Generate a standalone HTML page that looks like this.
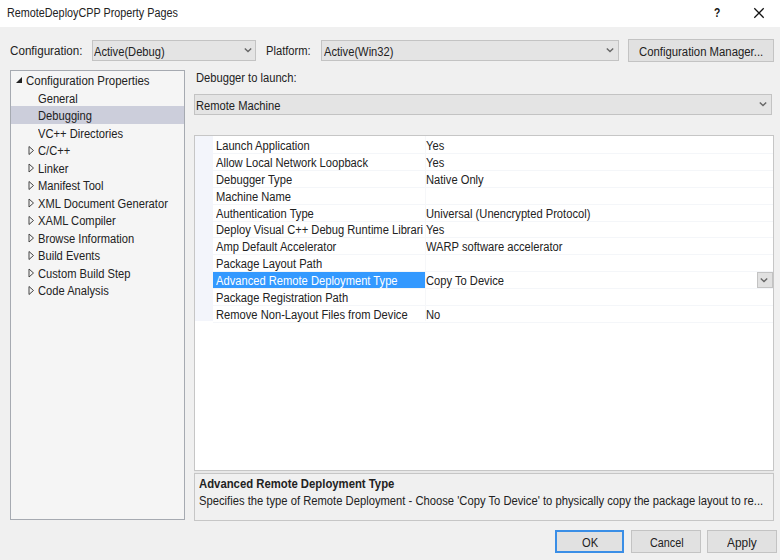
<!DOCTYPE html>
<html><head><meta charset="utf-8">
<style>
html,body{margin:0;padding:0;width:780px;height:560px;overflow:hidden;background:#f0f0f0;}
body{position:relative;font-family:"Liberation Sans",sans-serif;font-size:11.15px;color:#222;}
.a{position:absolute;}
.t{position:absolute;line-height:15px;white-space:pre;font-size:12px;transform:scaleX(var(--sx,0.93));transform-origin:0 0;}
.box{position:absolute;box-sizing:border-box;}
.combo{background:#e4e4e4;border:1px solid #c3c3c3;}
.btn{background:#e1e1e1;border:1px solid #c3c3c3;box-sizing:border-box;position:absolute;}
.chev{position:absolute;}
</style></head><body>
<!-- title bar -->
<div class="a" style="left:0;top:0;width:780px;height:27px;background:#fff;"></div>
<div class="t" style="left:7px;top:6.3px;--sx:0.9;">RemoteDeployCPP Property Pages</div>
<div class="t" style="left:714.4px;top:6px;font-size:12.5px;font-weight:bold;--sx:0.82;color:#111;">?</div>
<svg class="a" style="left:753px;top:7px;" width="12" height="12" viewBox="0 0 12 12"><path d="M1.3 1.3L10.7 10.7M10.7 1.3L1.3 10.7" stroke="#111" stroke-width="1.25" fill="none"/></svg>

<!-- configuration row -->
<div class="t" style="left:10px;top:44px;--sx:0.97;">Configuration:</div>
<div class="box combo" style="left:92px;top:40px;width:164px;height:21px;"></div>
<div class="t" style="left:94px;top:44.5px;">Active(Debug)</div>
<svg class="chev" style="left:243.9px;top:47.2px;" width="9" height="6" viewBox="0 0 9 6"><path d="M0.8 1.5L4 4.6L7.2 1.5" stroke="#666" stroke-width="1.4" fill="none"/></svg>

<div class="t" style="left:266px;top:44px;">Platform:</div>
<div class="box combo" style="left:321px;top:40px;width:298px;height:21px;"></div>
<div class="t" style="left:324px;top:44.5px;">Active(Win32)</div>
<svg class="chev" style="left:605.9px;top:47.2px;" width="9" height="6" viewBox="0 0 9 6"><path d="M0.8 1.5L4 4.6L7.2 1.5" stroke="#666" stroke-width="1.4" fill="none"/></svg>

<div class="btn" style="left:628px;top:39px;width:146px;height:23px;"></div>
<div class="t" style="left:639px;top:45px;--sx:0.945;">Configuration Manager...</div>

<!-- tree -->
<div class="box" style="left:10px;top:70px;width:175px;height:450px;background:#f5f5f5;border:1px solid #a6aab1;"></div>
<div class="a" style="left:11px;top:106.2px;width:173px;height:17.4px;background:#cccedb;"></div>
<svg class="a" style="left:15px;top:76px;" width="8" height="8" viewBox="0 0 8 8"><path d="M7 1L7 7L1 7Z" fill="#222"/></svg>
<div class="t" style="left:26px;top:74.1px;--sx:0.955;">Configuration Properties</div>
<div class="t" style="left:38px;top:91.6px;">General</div>
<div class="t" style="left:38px;top:109.1px;">Debugging</div>
<div class="t" style="left:38px;top:126.6px;">VC++ Directories</div>
<div class="t" style="left:38px;top:144.1px;">C/C++</div>
<div class="t" style="left:38px;top:161.6px;">Linker</div>
<div class="t" style="left:38px;top:179.1px;">Manifest Tool</div>
<div class="t" style="left:38px;top:196.6px;">XML Document Generator</div>
<div class="t" style="left:38px;top:214.1px;">XAML Compiler</div>
<div class="t" style="left:38px;top:231.6px;">Browse Information</div>
<div class="t" style="left:38px;top:249.1px;">Build Events</div>
<div class="t" style="left:38px;top:266.6px;">Custom Build Step</div>
<div class="t" style="left:38px;top:284.1px;">Code Analysis</div>
<svg class="a" style="left:28px;top:141px;" width="7" height="160" viewBox="0 0 7 160">
<g fill="none" stroke="#444" stroke-width="1">
<path d="M1 5.5L1 13.5L5.5 9.5Z"/>
<path d="M1 23L1 31L5.5 27Z"/>
<path d="M1 40.5L1 48.5L5.5 44.5Z"/>
<path d="M1 58L1 66L5.5 62Z"/>
<path d="M1 75.5L1 83.5L5.5 79.5Z"/>
<path d="M1 93L1 101L5.5 97Z"/>
<path d="M1 110.5L1 118.5L5.5 114.5Z"/>
<path d="M1 128L1 136L5.5 132Z"/>
<path d="M1 145.5L1 153.5L5.5 149.5Z"/>
</g></svg>

<!-- debugger to launch -->
<div class="t" style="left:196px;top:71px;">Debugger to launch:</div>
<div class="box combo" style="left:194px;top:94px;width:578px;height:21px;"></div>
<div class="t" style="left:196px;top:98.9px;">Remote Machine</div>
<svg class="chev" style="left:759.2px;top:101px;" width="9" height="6" viewBox="0 0 9 6"><path d="M0.8 1.5L4 4.6L7.2 1.5" stroke="#666" stroke-width="1.4" fill="none"/></svg>

<!-- property grid -->
<div class="box" style="left:194px;top:135px;width:580px;height:336px;background:#fff;border:1px solid #c6c6c6;"></div>
<div class="a" style="left:195px;top:136px;width:18px;height:185px;background:#f3f5fb;"></div>
<div id="rows">
<div class="a" style="left:213px;top:153.33px;width:560px;height:1px;background:#f4f6f9;"></div>
<div class="t" style="left:216px;top:139.30px;width:224.7px;overflow:hidden;color:#222;">Launch Application</div>
<div class="t" style="left:426px;top:139.30px;">Yes</div>
<div class="a" style="left:213px;top:170.16px;width:560px;height:1px;background:#f4f6f9;"></div>
<div class="t" style="left:216px;top:156.13px;width:224.7px;overflow:hidden;color:#222;">Allow Local Network Loopback</div>
<div class="t" style="left:426px;top:156.13px;">Yes</div>
<div class="a" style="left:213px;top:186.99px;width:560px;height:1px;background:#f4f6f9;"></div>
<div class="t" style="left:216px;top:172.96px;width:224.7px;overflow:hidden;color:#222;">Debugger Type</div>
<div class="t" style="left:426px;top:172.96px;">Native Only</div>
<div class="a" style="left:213px;top:203.82px;width:560px;height:1px;background:#f4f6f9;"></div>
<div class="t" style="left:216px;top:189.79px;width:224.7px;overflow:hidden;color:#222;">Machine Name</div>
<div class="a" style="left:213px;top:220.65px;width:560px;height:1px;background:#f4f6f9;"></div>
<div class="t" style="left:216px;top:206.62px;width:224.7px;overflow:hidden;color:#222;">Authentication Type</div>
<div class="t" style="left:426px;top:206.62px;">Universal (Unencrypted Protocol)</div>
<div class="a" style="left:213px;top:237.48px;width:560px;height:1px;background:#f4f6f9;"></div>
<div class="t" style="left:216px;top:223.45px;width:224.7px;overflow:hidden;color:#222;">Deploy Visual C++ Debug Runtime Librari</div>
<div class="t" style="left:426px;top:223.45px;">Yes</div>
<div class="a" style="left:213px;top:254.31px;width:560px;height:1px;background:#f4f6f9;"></div>
<div class="t" style="left:216px;top:240.28px;width:224.7px;overflow:hidden;color:#222;">Amp Default Accelerator</div>
<div class="t" style="left:426px;top:240.28px;">WARP software accelerator</div>
<div class="a" style="left:213px;top:271.14px;width:560px;height:1px;background:#f4f6f9;"></div>
<div class="t" style="left:216px;top:257.11px;width:224.7px;overflow:hidden;color:#222;">Package Layout Path</div>
<div class="a" style="left:213px;top:287.97px;width:560px;height:1px;background:#f4f6f9;"></div>
<div class="a" style="left:213px;top:271.94px;width:212px;height:15.83px;background:#3399ff;"></div>
<div class="t" style="left:216px;top:273.94px;width:224.7px;overflow:hidden;color:#fff;">Advanced Remote Deployment Type</div>
<div class="t" style="left:426px;top:273.94px;">Copy To Device</div>
<div class="a" style="left:213px;top:304.80px;width:560px;height:1px;background:#f4f6f9;"></div>
<div class="t" style="left:216px;top:290.77px;width:224.7px;overflow:hidden;color:#222;">Package Registration Path</div>
<div class="a" style="left:213px;top:321.63px;width:560px;height:1px;background:#f4f6f9;"></div>
<div class="t" style="left:216px;top:307.60px;width:224.7px;overflow:hidden;color:#222;">Remove Non-Layout Files from Device</div>
<div class="t" style="left:426px;top:307.60px;">No</div>
<div class="a" style="left:425px;top:136px;width:1px;height:185px;background:#f6f7f9;"></div>
<div class="btn" style="left:757px;top:272px;width:16px;height:16px;"></div>
<svg class="chev" style="left:760.2px;top:276.5px;" width="9" height="6" viewBox="0 0 9 6"><path d="M0.8 1.5L4 4.6L7.2 1.5" stroke="#666" stroke-width="1.4" fill="none"/></svg>
</div><!--/rows-->

<!-- description -->
<div class="box" style="left:194px;top:473px;width:580px;height:48px;background:#f0f0f0;border:1px solid #c6c6c6;"></div>
<div class="a" style="left:194px;top:471px;width:580px;height:2px;background:#e8e8e8;"></div>
<div class="t" style="left:199px;top:477px;font-weight:bold;--sx:0.943;">Advanced Remote Deployment Type</div>
<div class="t" style="left:199px;top:493.7px;--sx:0.935;">Specifies the type of Remote Deployment - Choose 'Copy To Device' to physically copy the package layout to re...</div>

<!-- buttons -->
<div class="btn" style="left:555px;top:530px;width:69px;height:23px;border:2px solid #3a8ee6;"></div>
<div class="t" style="left:582px;top:536.2px;">OK</div>
<div class="btn" style="left:631px;top:530px;width:70px;height:23px;"></div>
<div class="t" style="left:649.5px;top:536.2px;--sx:0.9;">Cancel</div>
<div class="btn" style="left:707px;top:530px;width:70px;height:23px;"></div>
<div class="t" style="left:726.5px;top:536.2px;--sx:0.99;">Apply</div>
</body></html>
